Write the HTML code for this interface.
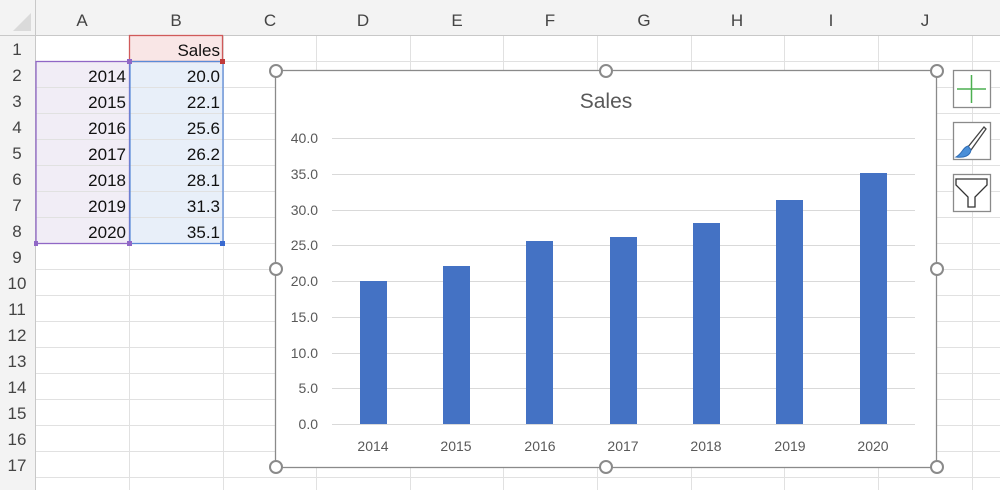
<!DOCTYPE html>
<html><head><meta charset="utf-8"><style>
body{margin:0;width:1000px;height:490px;overflow:hidden;background:#fff;font-family:"Liberation Sans",sans-serif}
svg text{font-family:"Liberation Sans",sans-serif}
</style></head><body>
<svg width="1000" height="490" xmlns="http://www.w3.org/2000/svg">
<rect x="0" y="0" width="1000" height="35" fill="#f3f3f3"/>
<rect x="0" y="0" width="35" height="490" fill="#f3f3f3"/>
<polygon points="13,31 31,31 31,13" fill="#dadada"/>
<rect x="130" y="36" width="93" height="25" fill="#f9e6e6"/>
<rect x="36" y="62" width="93" height="182" fill="#f1edf6"/>
<rect x="130" y="62" width="93" height="182" fill="#e8eff9"/>
<g stroke="#e1e1e1" stroke-width="1">
<line x1="35" y1="61.5" x2="1000" y2="61.5"/><line x1="35" y1="87.5" x2="1000" y2="87.5"/><line x1="35" y1="113.5" x2="1000" y2="113.5"/><line x1="35" y1="139.5" x2="1000" y2="139.5"/><line x1="35" y1="165.5" x2="1000" y2="165.5"/><line x1="35" y1="191.5" x2="1000" y2="191.5"/><line x1="35" y1="217.5" x2="1000" y2="217.5"/><line x1="35" y1="243.5" x2="1000" y2="243.5"/><line x1="35" y1="269.5" x2="1000" y2="269.5"/><line x1="35" y1="295.5" x2="1000" y2="295.5"/><line x1="35" y1="321.5" x2="1000" y2="321.5"/><line x1="35" y1="347.5" x2="1000" y2="347.5"/><line x1="35" y1="373.5" x2="1000" y2="373.5"/><line x1="35" y1="399.5" x2="1000" y2="399.5"/><line x1="35" y1="425.5" x2="1000" y2="425.5"/><line x1="35" y1="451.5" x2="1000" y2="451.5"/><line x1="35" y1="477.5" x2="1000" y2="477.5"/>
<line x1="129.5" y1="35" x2="129.5" y2="490"/><line x1="223.5" y1="35" x2="223.5" y2="490"/><line x1="316.5" y1="35" x2="316.5" y2="490"/><line x1="410.5" y1="35" x2="410.5" y2="490"/><line x1="503.5" y1="35" x2="503.5" y2="490"/><line x1="597.5" y1="35" x2="597.5" y2="490"/><line x1="691.5" y1="35" x2="691.5" y2="490"/><line x1="784.5" y1="35" x2="784.5" y2="490"/><line x1="878.5" y1="35" x2="878.5" y2="490"/><line x1="972.5" y1="35" x2="972.5" y2="490"/>
</g>
<line x1="0" y1="35.5" x2="1000" y2="35.5" stroke="#c8c8c8"/>
<line x1="35.5" y1="0" x2="35.5" y2="490" stroke="#c8c8c8"/>
<g fill="#444" font-size="17" text-anchor="middle">
<text x="82" y="26">A</text><text x="176" y="26">B</text><text x="270" y="26">C</text><text x="363" y="26">D</text><text x="457" y="26">E</text><text x="550" y="26">F</text><text x="644" y="26">G</text><text x="737" y="26">H</text><text x="831" y="26">I</text><text x="925" y="26">J</text>
</g>
<g fill="#444" font-size="17" text-anchor="middle">
<text x="17" y="55">1</text><text x="17" y="81">2</text><text x="17" y="107">3</text><text x="17" y="133">4</text><text x="17" y="159">5</text><text x="17" y="185">6</text><text x="17" y="211">7</text><text x="17" y="237">8</text><text x="17" y="263">9</text><text x="17" y="289">10</text><text x="17" y="315">11</text><text x="17" y="341">12</text><text x="17" y="367">13</text><text x="17" y="393">14</text><text x="17" y="419">15</text><text x="17" y="445">16</text><text x="17" y="471">17</text>
</g>
<g fill="#111" font-size="17" text-anchor="end">
<text x="220" y="56">Sales</text>
<text x="126" y="82">2014</text><text x="126" y="108">2015</text><text x="126" y="134">2016</text><text x="126" y="160">2017</text><text x="126" y="186">2018</text><text x="126" y="212">2019</text><text x="126" y="238">2020</text>
<text x="220" y="82">20.0</text><text x="220" y="108">22.1</text><text x="220" y="134">25.6</text><text x="220" y="160">26.2</text><text x="220" y="186">28.1</text><text x="220" y="212">31.3</text><text x="220" y="238">35.1</text>
</g>
<rect x="129.5" y="35.5" width="93" height="26" fill="none" stroke="#d05a5a" stroke-width="1.3"/>
<rect x="36" y="61.5" width="93.5" height="182" fill="none" stroke="#9067c6" stroke-width="1.3"/>
<rect x="130" y="61.5" width="93" height="182" fill="none" stroke="#5a8ad8" stroke-width="1.3"/>
<rect x="127" y="59" width="5" height="5" fill="#9067c6"/><rect x="220" y="59" width="5" height="5" fill="#c03a3a"/><rect x="127" y="241" width="5" height="5" fill="#9067c6"/><rect x="220" y="241" width="5" height="5" fill="#3a6ad0"/><rect x="34" y="241" width="4" height="5" fill="#9067c6"/>
<rect x="275.5" y="70.5" width="661" height="397" fill="#fff" stroke="#8a8a8a" stroke-width="1.3"/>
<text x="606" y="108" font-size="21" fill="#595959" text-anchor="middle">Sales</text>
<g stroke="#d9d9d9"><line x1="332" y1="138.5" x2="915" y2="138.5"/><line x1="332" y1="174.5" x2="915" y2="174.5"/><line x1="332" y1="210.5" x2="915" y2="210.5"/><line x1="332" y1="245.5" x2="915" y2="245.5"/><line x1="332" y1="281.5" x2="915" y2="281.5"/><line x1="332" y1="317.5" x2="915" y2="317.5"/><line x1="332" y1="353.5" x2="915" y2="353.5"/><line x1="332" y1="388.5" x2="915" y2="388.5"/><line x1="332" y1="424.5" x2="915" y2="424.5"/></g>
<g fill="#595959" font-size="14" text-anchor="end">
<text x="318" y="143">40.0</text><text x="318" y="179">35.0</text><text x="318" y="215">30.0</text><text x="318" y="250">25.0</text><text x="318" y="286">20.0</text><text x="318" y="322">15.0</text><text x="318" y="358">10.0</text><text x="318" y="393">5.0</text><text x="318" y="429">0.0</text>
</g>
<g fill="#4472c4">
<rect x="360" y="281" width="27" height="143"/><rect x="443" y="266" width="27" height="158"/><rect x="526" y="241" width="27" height="183"/><rect x="610" y="237" width="27" height="187"/><rect x="693" y="223" width="27" height="201"/><rect x="776" y="200" width="27" height="224"/><rect x="860" y="173" width="27" height="251"/>
</g>
<g fill="#595959" font-size="14" text-anchor="middle">
<text x="373" y="451">2014</text><text x="456" y="451">2015</text><text x="540" y="451">2016</text><text x="623" y="451">2017</text><text x="706" y="451">2018</text><text x="790" y="451">2019</text><text x="873" y="451">2020</text>
</g>
<g fill="#fff" stroke="#8a8a8a" stroke-width="2">
<circle cx="276" cy="71" r="6"/><circle cx="606" cy="71" r="6"/><circle cx="937" cy="71" r="6"/>
<circle cx="276" cy="269" r="6"/><circle cx="937" cy="269" r="6"/>
<circle cx="276" cy="467" r="6"/><circle cx="606" cy="467" r="6"/><circle cx="937" cy="467" r="6"/>
</g>
<g fill="#fff" stroke="#8a8a8a" stroke-width="1.3">
<rect x="953.5" y="70.5" width="37" height="37"/><rect x="953.5" y="122.5" width="37" height="37"/><rect x="953.5" y="174.5" width="37" height="37"/>
</g>
<g stroke="#4caf50" stroke-width="1.5"><line x1="957" y1="89" x2="986" y2="89"/><line x1="971.5" y1="75" x2="971.5" y2="103"/></g>
<path d="M986 129 L984 127 L968 147 L971 150 Z" fill="#fff" stroke="#444" stroke-width="1.3"/>
<path d="M968 146 C962 148 963 153 956 157 C964 158 970 156 971 150 Z" fill="#4a8fd8" stroke="#2f6db5" stroke-width="1"/>
<path d="M956 179 H987 V185 L975 197 V207 H968 V197 L956 185 Z" fill="#fff" stroke="#333" stroke-width="1.3"/>
</svg>
</body></html>
